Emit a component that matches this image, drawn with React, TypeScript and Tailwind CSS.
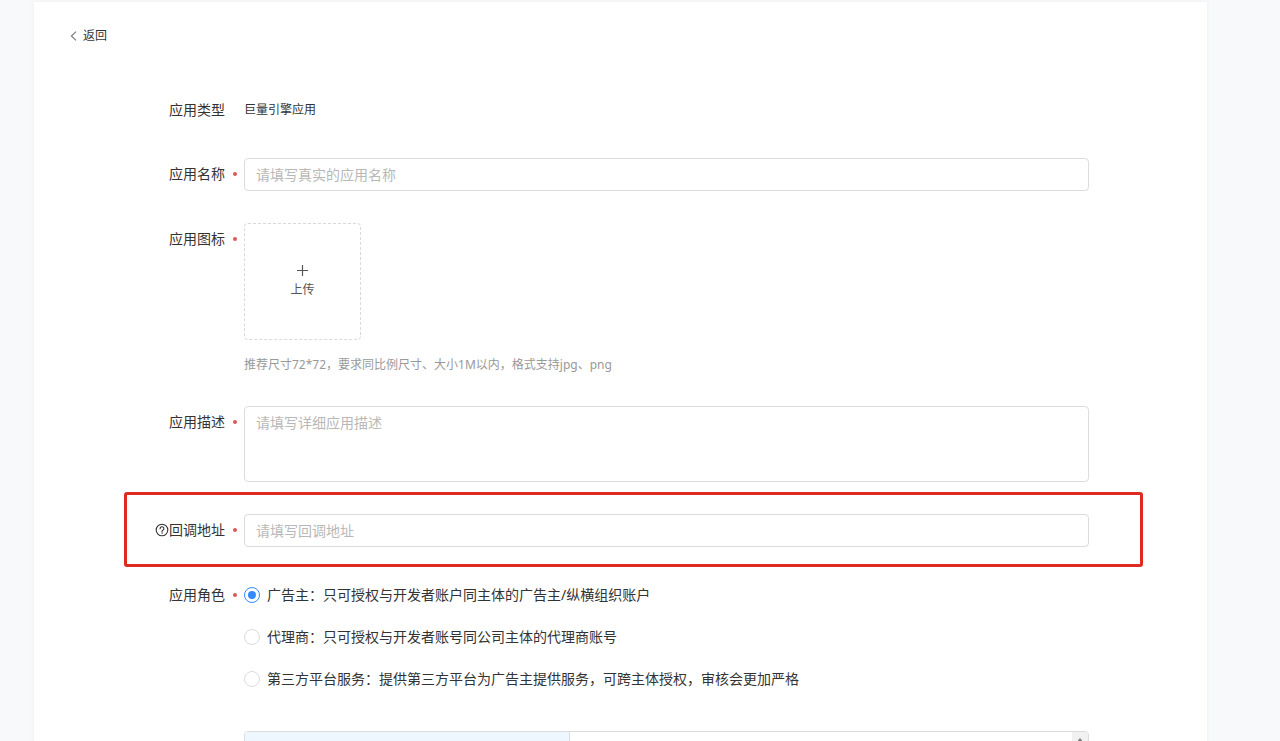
import type { ReactNode } from "react";
import { useState } from "react";

const ROLES = [
  { value: "advertiser", label: "广告主：只可授权与开发者账户同主体的广告主/纵横组织账户" },
  { value: "agent", label: "代理商：只可授权与开发者账号同公司主体的代理商账号" },
  { value: "platform", label: "第三方平台服务：提供第三方平台为广告主提供服务，可跨主体授权，审核会更加严格" },
];

const FIELD =
  "block w-full rounded-[4px] border border-[#dcdcdc] bg-white px-[11px] text-sm text-[#333] placeholder:text-[#b8b8b8] outline-none focus:border-[#338aff]";

interface RowProps {
  label: string;
  htmlFor?: string;
  required?: boolean;
  help?: boolean;
  highlight?: boolean;
  children: ReactNode;
}

function HelpIcon() {
  return (
    <svg width="14" height="14" viewBox="0 0 14 14" fill="none" stroke="#333" strokeLinecap="round">
      <circle cx="7" cy="7" r="5.8" strokeWidth="1.1" />
      <path d="M5.1 5.7a1.9 1.9 0 1 1 2.8 1.6c-.6.35-.9.6-.9 1.1" strokeWidth="1.1" />
      <circle cx="7" cy="10" r=".35" fill="#333" strokeWidth=".5" />
    </svg>
  );
}

function FormRow({ label, htmlFor, required, help, highlight, children }: RowProps) {
  return (
    <div className="relative flex items-start pr-[54px]">
      <div className="flex h-8 w-[120px] shrink-0 items-center justify-end">
        {help && <HelpIcon />}
        {htmlFor ? (
          <label htmlFor={htmlFor} className="text-sm">{label}</label>
        ) : (
          <span className="text-sm">{label}</span>
        )}
        <span className="flex w-[19px] justify-center">
          {required && <span className="size-1 rounded-full bg-[#e0575b]" />}
        </span>
      </div>
      <div className="min-w-0 flex-1">{children}</div>
      {highlight && (
        <div className="pointer-events-none absolute inset-x-0 -top-[22px] -bottom-5 rounded-[3px] border-3 border-[#df2a20]" />
      )}
    </div>
  );
}

export default function App() {
  const [role, setRole] = useState("advertiser");

  return (
    <div className="h-screen overflow-hidden bg-[#f7f9fb] pt-0.5 pr-[73px] pl-[34px] font-['Noto_Sans','Noto_Sans_CJK_SC',sans-serif] text-[#333]">
      <main className="min-h-full bg-white pt-6 shadow-[0_0_4px_rgba(0,0,0,0.06)]">
        <a href="#" className="ml-9 flex h-5 w-fit items-center gap-1.5 text-xs">
          <svg width="7" height="10" viewBox="0 0 7 10" fill="none" stroke="#777" strokeWidth="1.1">
            <path d="M6 .7 1.4 5 6 9.3" />
          </svg>
          返回
        </a>

        <form className="mt-12 mr-16 ml-[90px] flex flex-col gap-8">
          <FormRow label="应用类型">
            <p className="text-xs leading-8">巨量引擎应用</p>
          </FormRow>

          <FormRow label="应用名称" htmlFor="app-name" required>
            <input id="app-name" type="text" placeholder="请填写真实的应用名称" className={`${FIELD} h-[33px]`} />
          </FormRow>

          <FormRow label="应用图标" htmlFor="app-icon" required>
            <button
              id="app-icon"
              type="button"
              className="flex size-[117px] flex-col items-center justify-center gap-1.5 rounded-[4px] border border-dashed border-[#d9d9d9] text-xs text-[#555]"
            >
              <svg width="11" height="11" viewBox="0 0 11 11" stroke="#555" strokeWidth="1.2">
                <path d="M5.5 0v11M0 5.5h11" />
              </svg>
              上传
            </button>
            <p className="mt-4 text-xs leading-[18px] text-[#999]">
              推荐尺寸72*72，要求同比例尺寸、大小1M以内，格式支持jpg、png
            </p>
          </FormRow>

          <FormRow label="应用描述" htmlFor="app-desc" required>
            <textarea id="app-desc" placeholder="请填写详细应用描述" className={`${FIELD} h-[76px] resize-none py-1.5`} />
          </FormRow>

          <FormRow label="回调地址" htmlFor="callback" required help highlight>
            <input id="callback" type="text" placeholder="请填写回调地址" className={`${FIELD} h-[33px]`} />
          </FormRow>

          <FormRow label="应用角色" required>
            <div className="flex flex-col gap-2.5">
              {ROLES.map(({ value, label }) => (
                <label key={value} className="flex h-8 items-center gap-[7px] text-sm">
                  <input
                    type="radio"
                    name="role"
                    value={value}
                    checked={role === value}
                    onChange={() => setRole(value)}
                    className="grid size-4 shrink-0 appearance-none place-content-center rounded-full border border-[#dcdcdc] before:size-2 before:rounded-full checked:border-[#338aff] checked:before:bg-[#338aff]"
                  />
                  {label}
                </label>
              ))}
            </div>

            {/* Permission panel */}
            <div className="mt-9 flex h-60 overflow-hidden rounded-[4px] border border-[#dcdcdc]">
              <div className="w-[325px] border-r border-[#dcdcdc] bg-[#eef6ff]" />
              <div className="flex-1" />
              <div className="flex w-4 justify-center bg-[#f1f1f1] pt-1.5">
                <svg width="6" height="4" viewBox="0 0 6 4" fill="#777">
                  <path d="M3 0 6 4H0z" />
                </svg>
              </div>
            </div>
          </FormRow>
        </form>
      </main>
    </div>
  );
}
